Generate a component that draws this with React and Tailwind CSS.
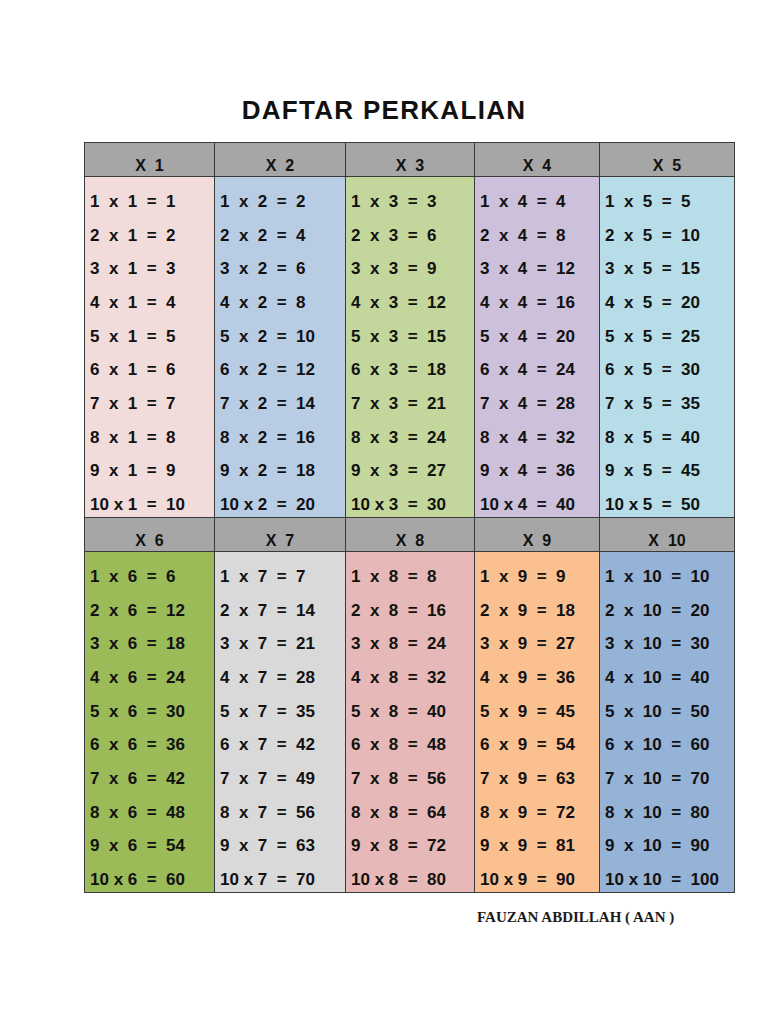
const TOP = [
  { n: 1, bg: 'bg-[#f2dcdb]', w: 'w-[130px]' },
  { n: 2, bg: 'bg-[#b8cce4]', w: 'w-[131px]' },
  { n: 3, bg: 'bg-[#c3d69b]', w: 'w-[129px]' },
  { n: 4, bg: 'bg-[#ccc0da]', w: 'w-[125px]' },
  { n: 5, bg: 'bg-[#b7dde8]', w: 'w-[135px]' },
];

const BOTTOM = [
  { n: 6, bg: 'bg-[#9bbb59]', w: 'w-[130px]' },
  { n: 7, bg: 'bg-[#d9d9d9]', w: 'w-[131px]' },
  { n: 8, bg: 'bg-[#e6b8b7]', w: 'w-[129px]' },
  { n: 9, bg: 'bg-[#fac090]', w: 'w-[125px]' },
  { n: 10, bg: 'bg-[#95b3d7]', w: 'w-[135px]' },
];

const ROWS = [1, 2, 3, 4, 5, 6, 7, 8, 9, 10];

// spacing follows the original sheet: "10" rows have a tighter "x"
function line(i, n) {
  if (i === 10) return `10 x ${n}  =  ${i * n}`;
  return `${i}  x  ${n}  =  ${i * n}`;
}

function Column({ col }) {
  return (
    <div className={`${col.w} flex flex-col`}>
      <div className="h-[34px] bg-[#a6a6a6] border-r border-b border-[#3a3a3a] pt-[15px] text-center text-[16px] leading-[16px] whitespace-pre">
        {`X  ${col.n}`}
      </div>
      <div className={`h-[341px] ${col.bg} border-r border-b border-[#3a3a3a] pt-[8px] pl-[5px] overflow-hidden flex flex-col`}>
        {ROWS.map((i) => (
          <div key={i} className="h-[33.67px] shrink-0 flex items-center whitespace-pre text-[17px]">
            {line(i, col.n)}
          </div>
        ))}
      </div>
    </div>
  );
}

export default function App() {
  return (
    <div className="w-[768px] h-[1024px] bg-white text-[#111] font-['Liberation_Sans',Arial,sans-serif]">
      <div className="pt-[95px] text-center text-[26px] leading-[30px] font-bold tracking-[1.3px]">
        DAFTAR PERKALIAN
      </div>

      <div className="ml-[84px] mt-[17px] w-[651px] border-t border-l border-[#3a3a3a] font-bold">
        <div className="flex">
          {TOP.map((c) => <Column key={c.n} col={c} />)}
        </div>
        <div className="flex">
          {BOTTOM.map((c) => <Column key={c.n} col={c} />)}
        </div>
      </div>

      <div className="pl-[477px] pt-[14px] font-['Liberation_Serif','Times_New_Roman',serif] font-bold text-[15px] leading-[20px] text-[#1a1a1a] whitespace-pre">
        FAUZAN ABDILLAH ( AAN )
      </div>
    </div>
  );
}
